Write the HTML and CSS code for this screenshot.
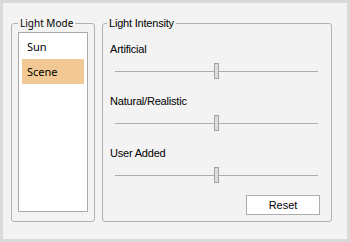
FILE: index.html
```html
<!DOCTYPE html>
<html lang="en">
<head>
    <meta charset="UTF-8">
    <title>Light Settings</title>
    <link rel="stylesheet" href="styles.css">
</head>
<body>
    <div class="window">
        <fieldset class="group mode-group">
            <legend>Light Mode</legend>
            <div class="group-body">
                <ul class="listbox">
                    <li>Sun</li>
                    <li class="selected">Scene</li>
                </ul>
            </div>
        </fieldset>

        <fieldset class="group intensity-group">
            <legend>Light Intensity</legend>
            <div class="group-body">
                <div class="field-label">Artificial</div>
                <div class="slider"><span class="track"></span><span class="thumb"></span></div>
                <div class="field-label">Natural/Realistic</div>
                <div class="slider"><span class="track"></span><span class="thumb"></span></div>
                <div class="field-label">User Added</div>
                <div class="slider"><span class="track"></span><span class="thumb"></span></div>
                <button class="reset-btn">Reset</button>
            </div>
        </fieldset>
    </div>
</body>
</html>
```

FILE: styles.css
```css
* {
    margin: 0;
    padding: 0;
    box-sizing: border-box;
}

body {
    font-family: 'Liberation Sans', Arial, sans-serif;
    background: #f3f3f3;
}

.window {
    width: 350px;
    height: 242px;
    border: 3px solid #dadada;
    background: #f3f3f3;
    display: flex;
    gap: 7px;
    padding: 13px 15px 17px 8px;
}

.group {
    border: 1px solid #b2b2b2;
    border-radius: 3px;
    min-width: 0;
    padding: 0;
}

.group legend {
    line-height: 14px;
    padding: 0 2px;
    color: #000;
}

/* Light Mode */
.mode-group {
    width: 84px;
}

.mode-group legend {
    font-family: 'Noto Sans', sans-serif;
    font-size: 10px;
    margin-left: 6px;
}

.mode-group .group-body {
    padding: 2px 6px 0 6px;
}

.listbox {
    list-style: none;
    height: 180px;
    background: #fff;
    border: 1px solid #a9a9a9;
    padding: 1px 3px;
}

.listbox li {
    font-family: 'Noto Sans', sans-serif;
    font-size: 11px;
    height: 25px;
    line-height: 25px;
    padding-left: 5px;
    color: #000;
}

.listbox li.selected {
    background: #f2c994;
}

/* Light Intensity */
.intensity-group {
    width: 230px;
}

.intensity-group legend {
    font-size: 11px;
    letter-spacing: -0.2px;
    margin-left: 4px;
}

.intensity-group .group-body {
    padding: 12px 11px 0 7px;
    display: flex;
    flex-direction: column;
}

.field-label {
    font-size: 11px;
    letter-spacing: -0.2px;
    line-height: 14px;
    height: 14px;
    color: #000;
}

.slider {
    position: relative;
    width: 203px;
    height: 24px;
    margin: 0 0 14px 5px;
}

.slider .track {
    position: absolute;
    left: 0;
    right: 0;
    top: 15px;
    height: 1px;
    background: #acacac;
}

.slider .thumb {
    position: absolute;
    left: 99px;
    top: 7px;
    width: 5px;
    height: 16px;
    background: #dcdcdc;
    border: 1px solid #a2a2a2;
}

.group-body .slider:last-of-type {
    margin-bottom: 11px;
}

.reset-btn {
    align-self: flex-end;
    width: 74px;
    height: 20px;
    background: #fff;
    border: 1px solid #adadad;
    font-family: 'Liberation Sans', Arial, sans-serif;
    font-size: 11px;
    color: #000;
}
```
